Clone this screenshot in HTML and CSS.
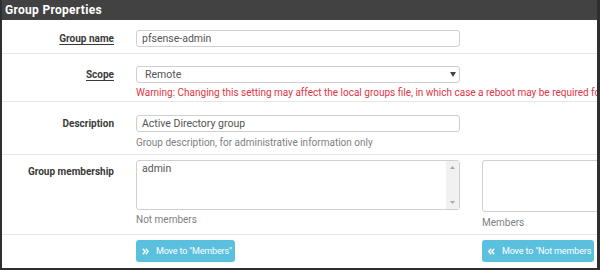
FILE: index.html
```html
<!DOCTYPE html>
<html>
<head>
<meta charset="utf-8">
<link rel="stylesheet" href="styles.css">
</head>
<body>
<div class="panel">
  <div class="panel-head">Group Properties</div>

  <div class="row r1">
    <div class="label"><span class="u">Group name</span></div>
    <div class="ctrl">
      <div class="input">pfsense-admin</div>
    </div>
  </div>

  <div class="row r2">
    <div class="label"><span class="u">Scope</span></div>
    <div class="ctrl">
      <div class="input select"><span>Remote</span>
        <svg class="caret" width="6" height="5" viewBox="0 0 6 5"><path d="M0 0H6L3 5Z" fill="#444"/></svg>
      </div>
      <div class="warn">Warning: Changing this setting may affect the local groups file, in which case a reboot may be required fo</div>
    </div>
  </div>

  <div class="row r3">
    <div class="label">Description</div>
    <div class="ctrl">
      <div class="input">Active Directory group</div>
      <div class="help h3">Group description, for administrative information only</div>
    </div>
  </div>

  <div class="row r4">
    <div class="label lm">Group membership</div>
    <div class="lists">
      <div class="col">
        <div class="listbox lb-left">
          <div class="items">admin</div>
          <div class="scroll">
            <svg width="5" height="3" viewBox="0 0 5 3"><path d="M0 3H5L2.5 0Z" fill="#a8a8a8"/></svg>
            <svg width="5" height="3" viewBox="0 0 5 3"><path d="M0 0H5L2.5 3Z" fill="#a8a8a8"/></svg>
          </div>
        </div>
        <div class="help h4">Not members</div>
      </div>
      <div class="col">
        <div class="listbox lb-right"></div>
        <div class="help h4r">Members</div>
      </div>
    </div>
  </div>

  <div class="row r5">
    <div class="label"></div>
    <div class="lists">
      <div class="col">
        <div class="btn">
          <svg width="7" height="7" viewBox="0 0 7 7"><path d="M0.8 0.8L3.2 3.5L0.8 6.2M3.8 0.8L6.2 3.5L3.8 6.2" fill="none" stroke="#fff" stroke-width="1.4"/></svg>
          <span>Move to "Members"</span>
        </div>
      </div>
      <div class="col">
        <div class="btn">
          <svg width="7" height="7" viewBox="0 0 7 7"><path d="M3.2 0.8L0.8 3.5L3.2 6.2M6.2 0.8L3.8 3.5L6.2 6.2" fill="none" stroke="#fff" stroke-width="1.4"/></svg>
          <span>Move to "Not members</span>
        </div>
      </div>
    </div>
  </div>
</div>
</body>
</html>
```

FILE: styles.css
```css
html, body {
  margin: 0;
  padding: 0;
  background: #ffffff;
}

.panel {
  width: 600px;
  height: 270px;
  box-sizing: border-box;
  border-left: 2px solid #2e2e2e;
  border-right: 3px solid #2e2e2e;
  border-bottom: 2px solid #2e2e2e;
  overflow: hidden;
  font-family: Roboto, "Liberation Sans", sans-serif;
  color: #333;
  background: #fff;
}

.panel-head {
  height: 20px;
  line-height: 20px;
  background: #424242;
  color: #fff;
  font-weight: bold;
  font-size: 12px;
  letter-spacing: 0.3px;
  padding-left: 3px;
}

.row {
  display: grid;
  grid-template-columns: 112px 1fr;
  column-gap: 22px;
  border-bottom: 1px solid #e6e6e6;
  box-sizing: border-box;
}

.r1 { height: 34px; padding-top: 10px; }
.r2 { height: 48px; padding-top: 12px; }
.r3 { height: 53px; padding-top: 13px; }
.r4 { height: 80px; padding-top: 5px; }
.r5 { height: 33px; padding-top: 5px; border-bottom: none; }

.label {
  text-align: right;
  font-weight: bold;
  font-size: 10px;
  line-height: 17px;
  color: #3a3a3a;
  white-space: nowrap;
}

.u {
  text-decoration: underline;
  text-underline-offset: 2px;
}

.lm { margin-top: 3px; }

.ctrl {
  min-width: 0;
}

.input {
  width: 324px;
  height: 17px;
  box-sizing: border-box;
  border: 1px solid #cfcfcf;
  border-radius: 3px;
  padding-left: 5px;
  font-size: 10.5px;
  line-height: 15px;
  color: #555;
  white-space: nowrap;
}

.select {
  display: flex;
  align-items: center;
  justify-content: space-between;
  padding-left: 8px;
  padding-right: 3px;
}

.caret { display: block; }

.warn {
  margin-top: 4px;
  font-size: 10px;
  line-height: 12px;
  color: #dc3545;
  white-space: nowrap;
}

.help {
  font-size: 10px;
  line-height: 12px;
  color: #808080;
  white-space: nowrap;
}

.h3 { margin-top: 5px; }
.h4 { margin-top: 4px; }
.h4r { margin-top: 5px; }

.lists {
  display: flex;
  column-gap: 22px;
}

.col {
  width: 324px;
  flex: none;
}

.listbox {
  box-sizing: border-box;
  border: 1px solid #cfcfcf;
  border-radius: 3px;
  display: flex;
}

.lb-left { height: 50px; }
.lb-right { height: 52px; }

.items {
  flex: 1;
  padding: 1px 0 0 5px;
  font-size: 10.5px;
  line-height: 13px;
  color: #555;
}

.scroll {
  width: 13px;
  background: #f1f1f1;
  display: flex;
  flex-direction: column;
  justify-content: space-between;
  align-items: center;
  padding: 5px 0;
  box-sizing: border-box;
}

.scroll svg { display: block; }

.btn {
  width: fit-content;
  height: 22px;
  box-sizing: border-box;
  background: #5bc0de;
  border-radius: 3px;
  color: #fff;
  font-size: 9px;
  letter-spacing: -0.15px;
  display: flex;
  align-items: center;
  gap: 7px;
  padding: 0 3px 0 6px;
  white-space: nowrap;
}

.btn svg { display: block; flex: none; }
```
